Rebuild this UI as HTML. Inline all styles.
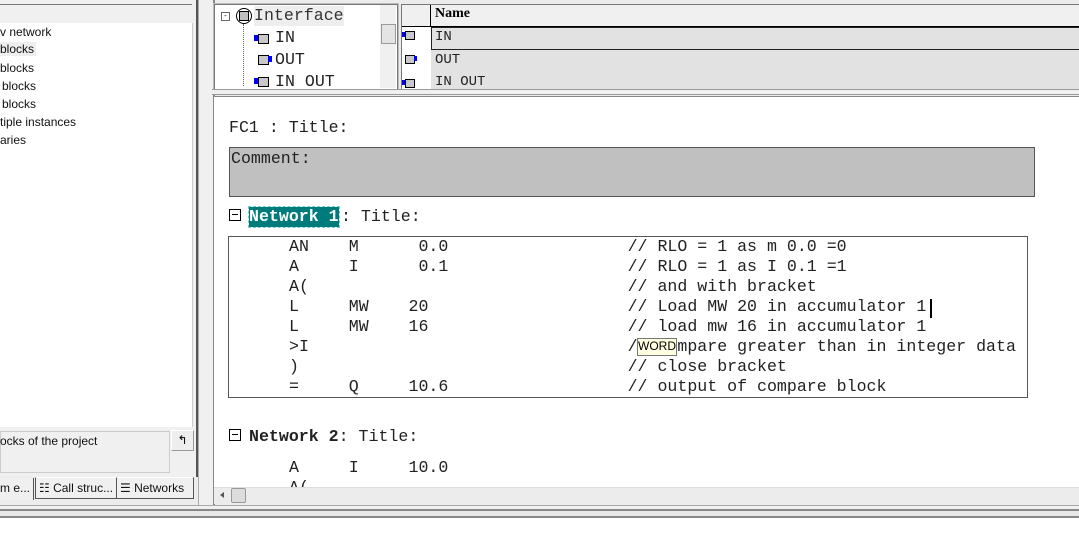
<!DOCTYPE html>
<html><head><meta charset="utf-8"><style>
body{margin:0;width:1079px;height:552px;background:#fff;position:relative;overflow:hidden;font-family:"Liberation Sans",sans-serif}
.a{position:absolute}
.m{font-family:"Liberation Mono",monospace;font-size:16.6px;color:#222;white-space:pre;line-height:20px}
.s{font-family:"Liberation Sans",sans-serif;font-size:12px;color:#111;white-space:nowrap}
.pin{position:absolute;width:9px;height:8px;background:#c8c8c8;border:1px solid #000}
.t{font-family:"Liberation Mono",monospace;font-size:14px;color:#222}
</style></head><body>
<div class="a" style="left:0;top:0;width:1079px;height:517px;background:#ececec"></div>
<div class="a" style="left:0;top:0;width:196px;height:477px;border-right:2px solid #555;background:#f0f0f0"></div>
<div class="a" style="left:0;top:4px;width:192px;height:18px;background:#f0f0f0;border-bottom:1px solid #aaa;border-top:1px solid #777"></div>
<div class="a" style="left:0;top:23px;width:192px;height:404px;background:#fff;border-right:1px solid #ccc"></div>
<div class="a s" style="left:0;top:25px">v network</div>
<div class="a s" style="left:0;top:42px;background:#eee;padding-right:2px">blocks</div>
<div class="a s" style="left:0;top:61px">blocks</div>
<div class="a s" style="left:2px;top:79px">blocks</div>
<div class="a s" style="left:2px;top:97px">blocks</div>
<div class="a s" style="left:0;top:115px">tiple instances</div>
<div class="a s" style="left:0;top:133px">aries</div>
<div class="a" style="left:0;top:431px;width:168px;height:40px;border:1px solid #ccc;background:#f0f0f0"></div>
<div class="a s" style="left:0;top:434px">ocks of the project</div>
<div class="a" style="left:171px;top:430px;width:21px;height:19px;background:#eee;border:1px solid #999;border-top-color:#fff;border-left-color:#fff;font-size:12px;text-align:center;line-height:18px">↰</div>
<div class="a s" style="left:0;top:478px;width:33px;height:22px;line-height:20px;border-right:1px solid #555;background:#f0f0f0">m e...</div>
<div class="a s" style="left:35px;top:477px;width:78px;height:20px;line-height:20px;border:1px solid #555;border-top:1px solid #fff;background:#f0f0f0;padding-left:3px">☷ Call struc...</div>
<div class="a s" style="left:116px;top:477px;width:73px;height:20px;line-height:20px;border:1px solid #555;border-top:1px solid #fff;background:#f0f0f0;padding-left:3px">☰ Networks</div>
<div class="a" style="left:198px;top:0;width:14px;height:505px;background:#f0f0f0;border-left:1px solid #aaa;border-right:2px solid #888"></div>
<div class="a" style="left:214px;top:4px;width:182px;height:84px;background:#fff;border:1px solid #777;box-shadow:0 0 0 1px #bbb"></div>
<div class="a" style="left:221px;top:12px;width:7px;height:7px;border:1px solid #666;font-size:8px;line-height:6px;text-align:center">-</div>
<div class="a" style="left:236px;top:8px;width:14px;height:14px;border:1px solid #000;border-radius:50%"></div>
<div class="a" style="left:239px;top:11px;width:8px;height:8px;background:#c0c0c0;border:1px solid #000"></div>
<div class="a" style="left:243px;top:24px;height:62px;border-left:1px dotted #666"></div>
<div class="a m" style="left:254px;top:6px;background:#eee;color:#333">Interface</div>
<div class="pin" style="left:258px;top:34px"></div><div class="a" style="left:254px;top:35px;width:4px;height:6px;background:#00f"></div>
<div class="a m" style="left:275px;top:28px">IN</div>
<div class="pin" style="left:258px;top:55px"></div><div class="a" style="left:268px;top:56px;width:4px;height:6px;background:#00f"></div>
<div class="a m" style="left:275px;top:50px">OUT</div>
<div class="pin" style="left:258px;top:77px"></div><div class="a" style="left:254px;top:78px;width:4px;height:6px;background:#00f"></div>
<div class="a m" style="left:275px;top:72px;height:17px;overflow:hidden">IN OUT</div>
<div class="a" style="left:380px;top:5px;width:16px;height:83px;background:#f0f0f0"></div>
<div class="a" style="left:381px;top:24px;width:13px;height:18px;background:#e4e4e4;border:1px solid #999"></div>
<div class="a" style="left:401px;top:4px;width:678px;height:85px;background:#fff;border-left:1px solid #777;border-top:1px solid #777"></div>
<div class="a" style="left:402px;top:5px;width:677px;height:21px;background:#f0f0f0;border-bottom:1px solid #000"></div>
<div class="a" style="left:430px;top:5px;height:21px;border-left:1px solid #000"></div>
<div class="a" style="left:435px;top:6px;font:bold 14px 'Liberation Serif',serif">Name</div>
<div class="a" style="left:431px;top:27px;width:648px;height:62px;background:#e2e2e2"></div>
<div class="a" style="left:431px;top:27px;width:647px;height:21px;border:1px solid #222"></div>
<div class="a t" style="left:435px;top:29px">IN</div>
<div class="a t" style="left:435px;top:52px">OUT</div>
<div class="a t" style="left:435px;top:74px;height:15px;overflow:hidden">IN OUT</div>
<div class="pin" style="left:405px;top:31px;width:8px;height:7px"></div><div class="a" style="left:402px;top:32px;width:3px;height:5px;background:#00f"></div>
<div class="pin" style="left:405px;top:55px;width:8px;height:7px"></div><div class="a" style="left:414px;top:56px;width:3px;height:5px;background:#00f"></div>
<div class="pin" style="left:405px;top:79px;width:8px;height:7px"></div><div class="a" style="left:402px;top:80px;width:3px;height:5px;background:#00f"></div>
<div class="a" style="left:212px;top:89px;width:867px;height:4px;background:#f0f0f0;border-top:1px solid #999;border-bottom:1px solid #999"></div>
<div class="a" style="left:213px;top:96px;width:866px;height:391px;background:#fff;border-left:1px solid #888;border-top:1px solid #888"></div>
<div class="a m" style="left:229px;top:118px">FC1 : Title:</div>
<div class="a" style="left:229px;top:147px;width:804px;height:48px;background:#c0c0c0;border:1px solid #555"></div>
<div class="a m" style="left:231px;top:149px">Comment:</div>
<div class="a" style="left:229px;top:209px;width:10px;height:10px;border:1px solid #000"></div><div class="a" style="left:232px;top:214px;width:6px;height:1px;background:#000"></div>
<div class="a m" style="left:249px;top:207px;background:#007b7b;color:#fff;font-weight:bold;outline:1px dashed #7cc">Network 1</div>
<div class="a m" style="left:341px;top:207px">: Title:</div>
<div class="a" style="left:228px;top:236px;width:798px;height:160px;border:1px solid #555"></div>
<div class="a m" style="left:289px;top:237px">AN    M      0.0                  // RLO = 1 as m 0.0 =0
A     I      0.1                  // RLO = 1 as I 0.1 =1
A(                                // and with bracket
L     MW    20                    // Load MW 20 in accumulator 1
L     MW    16                    // load mw 16 in accumulator 1
>I                                // compare greater than in integer data
)                                 // close bracket
=     Q     10.6                  // output of compare block</div>
<div class="a" style="left:930px;top:299px;width:2px;height:19px;background:#000"></div>
<div class="a" style="left:637px;top:338px;width:38px;height:16px;background:#ffffe1;border:1px solid #777;font:12px 'Liberation Sans',sans-serif;line-height:15px;text-align:center;color:#000">WORD</div>
<div class="a" style="left:229px;top:429px;width:10px;height:10px;border:1px solid #000"></div><div class="a" style="left:232px;top:434px;width:6px;height:1px;background:#000"></div>
<div class="a m" style="left:249px;top:427px"><b>Network 2</b>: Title:</div>
<div class="a m" style="left:289px;top:458px;height:29px;overflow:hidden">A     I     10.0
A(</div>
<div class="a" style="left:214px;top:487px;width:865px;height:16px;background:#ececec;border-top:1px solid #ddd"></div>
<div class="a" style="left:220px;top:492px;width:0;height:0;border-right:4px solid #555;border-top:3px solid transparent;border-bottom:3px solid transparent"></div>
<div class="a" style="left:231px;top:488px;width:13px;height:13px;background:#ddd;border:1px solid #999;border-radius:2px"></div>
<div class="a" style="left:0;top:505px;width:1079px;height:3px;background:#f0f0f0;border-top:1px solid #aaa"></div>
<div class="a" style="left:0;top:509px;width:1079px;height:5px;background:#e8e8e8;border-top:2px solid #888;border-bottom:2px solid #888"></div>
</body></html>
